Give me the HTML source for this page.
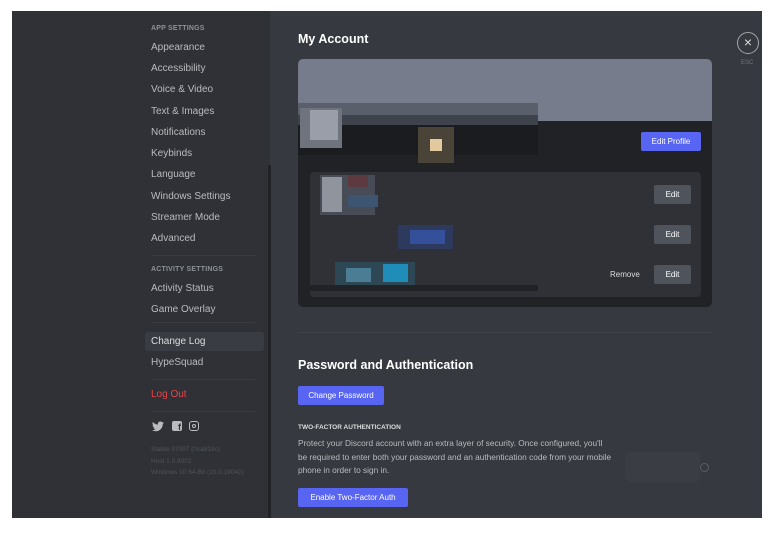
<!DOCTYPE html>
<html><head><meta charset="utf-8"><style>
*{margin:0;padding:0;box-sizing:border-box}
body{width:768px;height:534px;background:#fff;position:relative;overflow:hidden;font-family:"Liberation Sans",sans-serif}
.app{position:absolute;left:12px;top:11px;width:750px;height:507px;background:#36393f}
.side{position:absolute;left:12px;top:11px;width:258px;height:507px;background:#2f3136}
.sb{position:absolute;left:268px;top:165px;width:3px;height:353px;background:#202225}
.t{position:absolute;white-space:nowrap}
.it{position:absolute;left:151px;font-size:10px;color:#b9bbbe}
.hd{position:absolute;left:151px;font-size:7px;font-weight:bold;color:#8e9297;letter-spacing:.2px}
.dv{position:absolute;left:151px;width:104px;height:1px;background:#3a3c41}
.btn{position:absolute;background:#5865f2;color:#fff;font-size:8px;display:flex;align-items:center;justify-content:center;border-radius:2px}
.gb{position:absolute;background:#4f545c;color:#fff;font-size:8px;display:flex;align-items:center;justify-content:center;border-radius:2px}
.px{position:absolute}
</style></head><body>
<div class="app"></div>
<div class="side"></div>
<div class="sb"></div>
<div class="hd" style="top:25px">APP SETTINGS</div>
<div class="it" style="top:42px">Appearance</div>
<div class="it" style="top:63px">Accessibility</div>
<div class="it" style="top:84px">Voice &amp; Video</div>
<div class="it" style="top:106px">Text &amp; Images</div>
<div class="it" style="top:127px">Notifications</div>
<div class="it" style="top:148px">Keybinds</div>
<div class="it" style="top:169px">Language</div>
<div class="it" style="top:191px">Windows Settings</div>
<div class="it" style="top:212px">Streamer Mode</div>
<div class="it" style="top:233px">Advanced</div>
<div class="dv" style="top:255px"></div>
<div class="hd" style="top:266px">ACTIVITY SETTINGS</div>
<div class="it" style="top:283px">Activity Status</div>
<div class="it" style="top:304px">Game Overlay</div>
<div class="dv" style="top:322px"></div>
<div style="position:absolute;left:145px;top:332px;width:119px;height:19px;background:#393c43;border-radius:3px"></div>
<div class="it" style="top:336px;color:#dcddde">Change Log</div>
<div class="it" style="top:357px">HypeSquad</div>
<div class="dv" style="top:379px"></div>
<div class="it" style="top:389px;color:#ed4245">Log Out</div>
<div class="dv" style="top:411px"></div>
<svg style="position:absolute;left:152px;top:421px" width="12" height="11" viewBox="0 0 24 20"><path fill="#b9bbbe" d="M24 2.4c-.9.4-1.8.6-2.8.8 1-.6 1.8-1.6 2.2-2.7-1 .6-2 1-3.1 1.2C19.3.7 18 0 16.6 0c-2.7 0-4.9 2.2-4.9 4.9 0 .4 0 .8.1 1.1C7.7 5.8 4.1 3.9 1.7.9c-.4.7-.7 1.6-.7 2.5 0 1.7.9 3.2 2.2 4.1-.8 0-1.6-.2-2.2-.6v.1c0 2.4 1.7 4.4 3.9 4.8-.4.1-.8.2-1.3.2-.3 0-.6 0-.9-.1.6 2 2.4 3.4 4.6 3.4-1.7 1.3-3.8 2.1-6.1 2.1-.4 0-.8 0-1.2-.1 2.2 1.4 4.8 2.2 7.5 2.2 9.1 0 14-7.5 14-14v-.6c1-.7 1.8-1.6 2.5-2.5z"/></svg>
<div style="position:absolute;left:172px;top:421px;width:10px;height:10px;background:#b9bbbe;border-radius:2px;color:#2f3136;font-size:9px;font-weight:bold;text-align:right;padding-right:1px;line-height:12px">f</div>
<div style="position:absolute;left:189px;top:421px;width:10px;height:10px;border:1.5px solid #b9bbbe;border-radius:3px"><div style="position:absolute;left:1.5px;top:1.5px;width:4px;height:4px;border:1.2px solid #b9bbbe;border-radius:50%"></div></div>
<div class="t" style="left:151px;top:444px;font-size:6.5px;color:#4f535a;line-height:11.5px">Stable 97097 (0ca818c)<br>Host 1.0.9002<br>Windows 10 64-Bit (10.0.19042)</div>

<div class="t" style="left:298px;top:32px;font-size:12.5px;font-weight:bold;color:#fff">My Account</div>
<div style="position:absolute;left:737px;top:32px;width:22px;height:22px;border:1.5px solid #a3a6aa;border-radius:50%;color:#dcddde;font-size:14px;text-align:center;line-height:18px">×</div>
<div class="t" style="left:741px;top:60px;font-size:6px;color:#72767d">ESC</div>

<div style="position:absolute;left:298px;top:59px;width:414px;height:248px;background:#202225;border-radius:5px;overflow:hidden">
 <div style="height:62px;background:#767c8c"></div>
</div>
<div style="position:absolute;left:310px;top:172px;width:391px;height:125px;background:#2f3136;border-radius:4px"></div>
<!-- pixelated blob -->
<div class="px" style="left:298px;top:103px;width:240px;height:12px;background:#5a5f6c"></div>
<div class="px" style="left:298px;top:115px;width:240px;height:10px;background:#3e424b"></div>
<div class="px" style="left:298px;top:125px;width:240px;height:30px;background:#1b1c1f"></div>
<div class="px" style="left:300px;top:108px;width:42px;height:40px;background:#6e737e"></div>
<div class="px" style="left:310px;top:110px;width:28px;height:30px;background:#999ea8"></div>
<div class="px" style="left:418px;top:127px;width:36px;height:36px;background:#4a4438"></div>
<div class="px" style="left:430px;top:139px;width:12px;height:12px;background:#e3c9a0"></div>
<div class="px" style="left:320px;top:175px;width:55px;height:40px;background:#474c57"></div>
<div class="px" style="left:322px;top:177px;width:20px;height:35px;background:#8f949d"></div>
<div class="px" style="left:348px;top:175px;width:20px;height:12px;background:#5c3a40"></div>
<div class="px" style="left:348px;top:195px;width:30px;height:12px;background:#3e5572"></div>
<div class="px" style="left:398px;top:225px;width:55px;height:24px;background:#2d3a5e"></div>
<div class="px" style="left:410px;top:230px;width:35px;height:14px;background:#35509a"></div>
<div class="px" style="left:335px;top:262px;width:80px;height:26px;background:#2e4754"></div>
<div class="px" style="left:346px;top:268px;width:25px;height:14px;background:#4b7d95"></div>
<div class="px" style="left:383px;top:264px;width:25px;height:18px;background:#1f8db8"></div>
<div class="px" style="left:310px;top:285px;width:228px;height:6px;background:#202225"></div>

<div class="btn" style="left:641px;top:132px;width:60px;height:19px">Edit Profile</div>
<div class="gb" style="left:654px;top:185px;width:37px;height:19px">Edit</div>
<div class="gb" style="left:654px;top:225px;width:37px;height:19px">Edit</div>
<div class="gb" style="left:654px;top:265px;width:37px;height:19px">Edit</div>
<div class="t" style="left:610px;top:270px;font-size:8px;color:#dcddde">Remove</div>

<div style="position:absolute;left:298px;top:332px;width:414px;height:1px;background:#3f4248"></div>
<div class="t" style="left:298px;top:358px;font-size:12.5px;font-weight:bold;color:#fff">Password and Authentication</div>
<div class="btn" style="left:298px;top:386px;width:86px;height:19px">Change Password</div>
<div class="t" style="left:298px;top:424px;font-size:6.5px;font-weight:bold;color:#dcddde">TWO-FACTOR AUTHENTICATION</div>
<div class="t" style="left:298px;top:437px;font-size:8.3px;color:#b9bbbe;line-height:13.5px">Protect your Discord account with an extra layer of security. Once configured, you'll<br>be required to enter both your password and an authentication code from your mobile<br>phone in order to sign in.</div>
<div style="position:absolute;left:625px;top:452px;width:75px;height:30px;background:#3c3f46;border-radius:6px;opacity:.8"></div>
<div style="position:absolute;left:700px;top:463px;width:9px;height:9px;border:1px solid #5a5d64;border-radius:50%"></div>
<div class="btn" style="left:298px;top:488px;width:110px;height:19px">Enable Two-Factor Auth</div>
</body></html>
